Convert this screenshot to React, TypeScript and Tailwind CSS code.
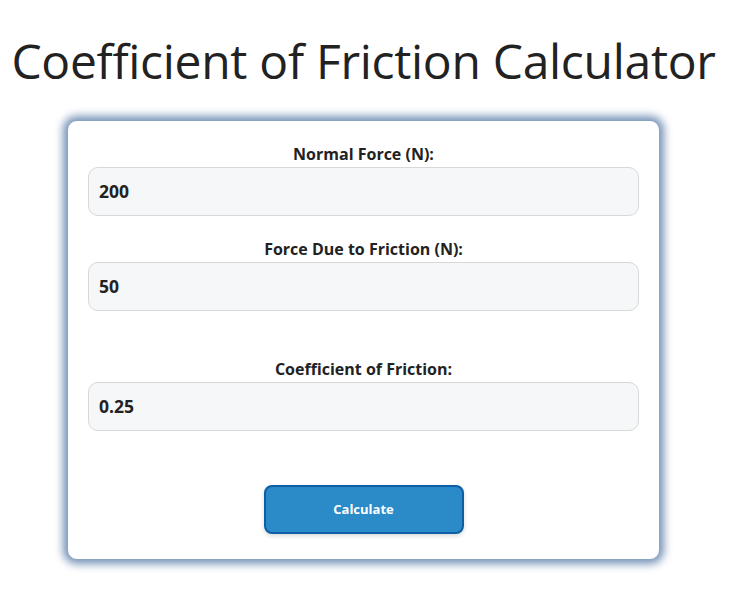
import React from "react";

export default function App() {
  const font = { fontFamily: '"Open Sans", "Noto Sans", "Liberation Sans", sans-serif' };
  return (
    <div className="min-h-screen bg-white w-[727px] flex flex-col items-center" style={font}>
      <h1 className="mt-[26px] text-[48px] leading-[70px] font-normal text-[#222] tracking-[-0.3px]">
        Coefficient of Friction Calculator
      </h1>
      <div className="mt-[24px] w-[593px] h-[440px] bg-white rounded-[10px] border border-[#8aa5c2] shadow-[0_0_9px_4px_rgba(85,120,165,0.8)] px-[20px] pt-[22px] flex flex-col">
        <label className="text-center text-[16px] font-bold text-[#222] leading-[22px]">Normal Force (N):</label>
        <div className="mt-[2px] h-[49px] rounded-[10px] border border-[#d8d8d8] bg-[#f6f7f9] flex items-center px-[10px] text-[17.5px] font-bold text-[#222]">200</div>
        <label className="mt-[22px] text-center text-[16px] font-bold text-[#222] leading-[22px]">Force Due to Friction (N):</label>
        <div className="mt-[2px] h-[49px] rounded-[10px] border border-[#d8d8d8] bg-[#f6f7f9] flex items-center px-[10px] text-[17.5px] font-bold text-[#222]">50</div>
        <label className="mt-[47px] text-center text-[16px] font-bold text-[#222] leading-[22px]">Coefficient of Friction:</label>
        <div className="mt-[2px] h-[49px] rounded-[10px] border border-[#d8d8d8] bg-[#f6f7f9] flex items-center px-[10px] text-[17.5px] font-bold text-[#222]">0.25</div>
        <div className="flex justify-center mt-[54px]">
          <button className="w-[200px] h-[49px] rounded-[8px] bg-[#2a8bc8] border-2 border-[#0e5ea5] text-white text-[13px] font-bold shadow-[0_2px_4px_rgba(0,0,0,0.15)]">
            Calculate
          </button>
        </div>
      </div>
    </div>
  );
}
